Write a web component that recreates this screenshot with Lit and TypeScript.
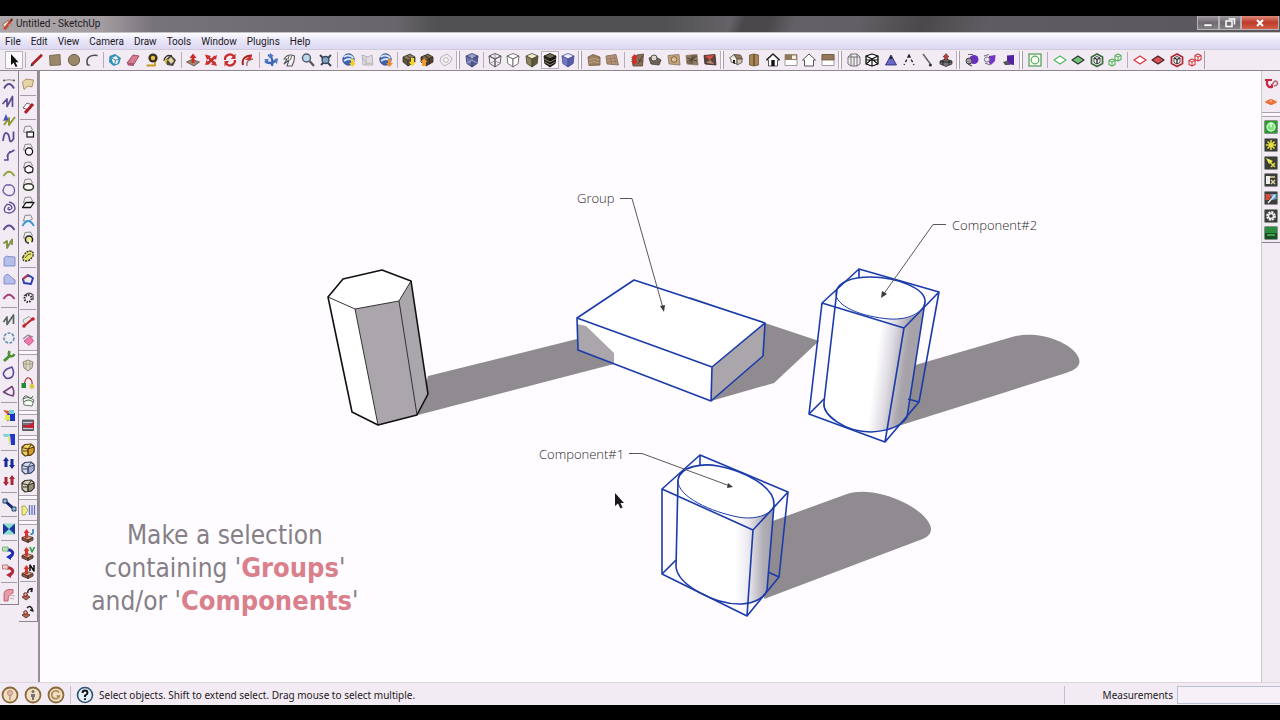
import { LitElement, html, css, svg, type TemplateResult, type SVGTemplateResult } from "lit";
import { customElement } from "lit/decorators.js";

type Art = SVGTemplateResult | SVGTemplateResult[];
type Tool = [label: string, art: Art, state?: string];
type Group = { tools: Tool[]; gap: "thin" | "mid" | "grip" | "end" };

/* ---- drawing helpers, all on a 16 x 16 grid ---- */
const line = (d: string, stroke: string, w = 1.4) =>
  svg`<path d=${d} fill="none" stroke=${stroke} stroke-width=${w} stroke-linejoin="round" />`;
const fill = (d: string, color: string, stroke = "none", w = 0.8) =>
  svg`<path d=${d} fill=${color} stroke=${stroke} stroke-width=${w} stroke-linejoin="round" />`;
const disc = (x: number, y: number, r: number, color: string, stroke = "none", w = 1) =>
  svg`<circle cx=${x} cy=${y} r=${r} fill=${color} stroke=${stroke} stroke-width=${w} />`;

const cube = (top: string, left: string, right: string, edge: string, w = 0.8): SVGTemplateResult[] => [
  fill("M8 1.5 14 4 8 7 2 4Z", top, edge, w),
  fill("M2 4 8 7V15L2.8 11.5Z", left, edge, w),
  fill("M14 4 8 7V15L13.2 11.5Z", right, edge, w),
];
const diamond = (color: string, edge: string): Art => fill("M2 8 8 4 14 8 8 12Z", color, edge, 1.2);
const boxed = (color: string): Art => [
  fill("M8 2 13.5 5V11.5L8 14.5 2.5 11.5V5Z", "#fff", color, 1.8),
  line("M5 6 8 7.5 11 6M8 7.5V12", "#222", 1.3),
  line("M5 6V10.5L8 12 11 10.5V6L8 4.5Z", "#333", 0.9),
];
const pair = (color: string): Art => [
  fill("M2 8.5 5 7 8 8.5V12.5L5 14 2 12.5Z", "#fff", color, 1.1),
  line("M2 8.5 5 10 8 8.5M5 10V14", color, 1),
  fill("M8 3.5 11 2 14 3.5V7.5L11 9 8 7.5Z", "#fff", color, 1.1),
  line("M8 3.5 11 5 14 3.5M11 5V9", color, 1),
];
const house = (body: string) => fill("M1.5 8 8 2 14.5 8H12.5V14H3.5V8Z", body, "#555", 1);
const sheet = (color: string) => fill("M2 3.5 13 2.5 14 13 3 12Z", color, "#8c735a");
const globe = (arrow: string): Art => [
  disc(7.5, 7.5, 5.8, "#3f62ad", "#27427f", 0.7),
  line("M2.5 5Q8 1.500 12.5 6M3 9Q8 5 13 9", "#d4e2f6", 1.8),
  fill("M10 7H13V11H15L11.5 15 8 11H10Z", arrow),
];
const crate = (a: string, b: string, edge: string): SVGTemplateResult[] => [
  fill("M2 5 9 2 14 5 7 8.5Z", a, edge),
  fill("M2 5 7 8.5V14L2 10Z", b, edge),
  fill("M14 5 7 8.5V14L14 10Z", b, edge),
  line("M5.5 3.5 10.5 6.8V12.3", edge, 0.9),
];
const corner = (a: string, b: string, edge: string): Art => [
  fill("M2 5 5 2.5 11 2 14 4.5V10L11 13 5 14 2 11Z", a, edge, 1.2),
  fill("M8 7 14 5V10L11 13 8 13.500Z", b, edge, 1),
  line("M2 5.500 8 7V13.500M3 9H8M8 7 11 3", edge, 1),
];
const badge = (base: Art): Art => [
  svg`<rect x="1.5" y="1.5" width="13" height="13" rx="1" fill="#3b3e3b" stroke="#8b8f8b" />`,
  svg`${base}`,
];
const loop = "M5 2.5 10.5 2 12.5 6 8 8.5 3.5 8Z";
const push = (letter: Art): Art => [
  fill("M2 10.5 7 8.5 13 10.5 8 13Z", "#c9a68f", "#5a3526"),
  fill("M2 10.5V13L8 15.5V13ZM13 10.5V13L8 15.5V13Z", "#8f5a46", "#4a2a1e"),
  fill("M5 11V6H3.5L6.5 2 9.5 6H8V11Z", "#d8342f"),
  svg`${letter}`,
];

/* ---- horizontal toolbar ---- */
const TOP: Group[] = [
  { gap: "thin", tools: [["Select", fill("M5 2V13L7.6 10.8 9.6 15 11.4 14.2 9.4 10.2H12.6Z", "#111"), "on"]] },
  { gap: "thin", tools: [
    ["Line", [line("M3 12.5 13 2.8", "#a51f24", 2.6), fill("M1.5 14.5 2.2 11.4 4.6 13.4Z", "#333")]],
    ["Rectangle", fill("M2.5 3.5 13 2.5 13.5 13 3 13.5Z", "#9b8769", "#6e5e48")],
    ["Circle", disc(8, 8, 5.6, "#9b8769", "#6e5e48")],
    ["Arc", [line("M4 13.500C1 7 5 2 13.500 3.500", "#4e4b50", 1.5), line("M2.500 12 6 13.500", "#4e4b50", 1.3)]],
  ] },
  { gap: "thin", tools: [
    ["Make Component", [fill("M2.500 4 8 2 14 6 12 12 6.500 14 2 10Z", "#2f8fb8"), fill("M4.500 6 9 4 12 7.500 10 12 6 11Z", "#eff8fc"), line("M4.500 6 8.500 8 12 7.500M8.500 8 8 11", "#2c6c8c", 0.8)]],
    ["Eraser", [fill("M2 11 8 3 14 4 9 12Z", "#d87b92", "#8c3a50"), fill("M2 11 9 12V14L3 13.5Z", "#a9566d")]],
    ["Tape Measure", [disc(9, 6, 4.6, "#3c3222"), disc(9, 6, 2.2, "#e9c43b"), line("M11 10V13.5H2.5", "#c49a1c", 1.8)]],
    ["Paint Bucket", [fill("M3 8 9 3 14 8 11 14 5 13Z", "#4e4638"), fill("M6 8 9 5 12 9 9 12Z", "#e3d8ab"), line("M2 9Q3 2 10 4", "#333", 1.4), fill("M2 8 6 7 4 12Z", "#d7b92e")]],
  ] },
  { gap: "thin", tools: [
    ["Push/Pull", [fill("M1.5 10 7 7.5 14.5 10 9 14Z", "#a08a6f", "#5c4b38"), fill("M6.5 11V6H4.5L8 1.5 11.5 6H9.5V11Z", "#cc2a28")]],
    ["Move", [line("M4 4 12 12M12.500 4.500 4 12", "#c02c29", 2.4), fill("M2 2.500 8 4 4 8ZM14 3 13 8 10 5ZM14 14 8 12.500 12 9ZM2 13 3.500 8 7 12Z", "#d4302b")]],
    ["Rotate", [line("M3 8A5 5 0 0 1 12 4.6M13 8A5 5 0 0 1 4 11.4", "#c92d2b", 2.2), fill("M13.5 1.5V7H8.8ZM2.5 14.5V9H7.2Z", "#c92d2b")]],
    ["Offset", [line("M3 13Q1 4 12 3.5", "#a12422", 2), line("M7 14Q5.5 8 13 7", "#88736e", 1.4), fill("M5 8 12 2.5 11 8Z", "#d4302b")]],
  ] },
  { gap: "thin", tools: [
    ["Orbit", [line("M2 9Q8 14 14 7M5 3Q11 5 9 14", "#3c66b4", 2.3), fill("M7 1 11 4 6 6ZM1.5 7 6 7 3 12ZM11 9 15 6 14 12Z", "#4f7bc8")]],
    ["Pan", [fill("M3 7Q7 1 13.500 4L13 9 11 14H6L8 8 3 12 6 7Z", "#f7f3f5", "#555", 1.1), line("M8 4 7 7M10.500 4 9.500 8", "#555", 0.9)]],
    ["Zoom", [line("M9.5 9 14 14", "#555", 2.2), disc(6.5, 6, 4, "#bcd7ea", "#4d5b70", 1.4)]],
    ["Zoom Extents", [line("M2 3 13 14M13 3 3 13", "#3a4658", 2), disc(7.5, 8, 3.5, "#7da7c4", "#3a4658", 1.3)]],
  ] },
  { gap: "thin", tools: [
    ["Add Location", globe("#f0cf2e")],
    ["Toggle Terrain", [fill("M3 3 9 5 13 3 14 13 4 13Z", "#dfdcdf", "#aaa5aa"), line("M4 6 8 12M7 5V12L13 11", "#bbb6bb", 1)]],
    ["Preview in Google Earth", globe("#e68a2e")],
  ] },
  { gap: "grip", tools: [
    ["Get Models", [...crate("#8a7c5e", "#5f563f", "#3b3527"), fill("M10 6H13V10H15L11.5 14.5 8 10H10Z", "#f2d62b")]],
    ["Share Model", [...crate("#7d664b", "#4f4130", "#332a1f"), fill("M3 14V10H1.5L5 6 8.5 10H7V14Z", "#ee9b32")]],
    ["Share Component", [fill("M3 5 9 2 14 6 12 11 6 14 2 9Z", "#f0eef0", "#aaa5aa"), disc(8, 8, 2.3, "#fff", "#b4b0b4")]],
  ] },
  { gap: "thin", tools: [["X-ray", [...cube("#8e95c4", "#6c74a8", "#555c92", "#383f6c"), line("M2.5 11 8 8.5 13.5 11M8 2V8.5", "#c3c8e8", 0.7)]]] },
  { gap: "grip", tools: [
    ["Wireframe", [...cube("none", "none", "none", "#555", 0.9), line("M2.8 11.5 8 8.8 13.2 11.5M8 1.5V8.8", "#777", 0.7)]],
    ["Hidden Line", cube("#fff", "#fff", "#fff", "#666", 0.9)],
    ["Shaded", cube("#f1ecd0", "#8d8362", "#5f573d", "#4b452f")],
    ["Shaded With Textures", [...cube("#6e694f", "#26241d", "#111", "#111"), line("M2.5 7 8 10 13.5 7M3 10 8 13 13 10", "#a39c78", 0.8)], "on"],
    ["Monochrome", cube("#eef0fc", "#7079c0", "#565eaa", "#4a5190")],
  ] },
  { gap: "mid", tools: [
    ["From Contours", [fill("M2 5 7 2.5 14 5V13L3 13.5Z", "#9c7f61", "#6f5740"), line("M3 8Q8 5 13.5 8M3 11Q8 8 13.5 11", "#c5a98b", 0.9)]],
    ["From Scratch", [fill("M2 4 12 2.5 14.5 13 3 12Z", "#b8977a", "#7f6650"), line("M6 4 8 12M10 3.5 12 12M3 7 13 6M3 10 14 9", "#8d7058", 0.7)]],
  ] },
  { gap: "grip", tools: [
    ["Smoove", [fill("M3 7 8 3 14.5 2 13.500 14 4 14Z", "#8a6f5a", "#594434"), fill("M5.500 2 9 6H7V9H9L5.500 13 2 9H4V6H2Z", "#d12c2a"), line("M9 12 13.500 4M9 7 13.500 10", "#4b3a2d", 0.9)]],
    ["Stamp", [fill("M2 6 7 4 14 8 12 13 4 12Z", "#6d6258", "#3f372f"), disc(7, 6, 3, "#ddd6ca", "#555")]],
    ["Drape", [sheet("#c0a37e"), disc(8, 7.5, 2.8, "#d9c19c", "#85683f")]],
    ["Add Detail", [sheet("#8d7b62"), line("M3 6 13 9M5 12 11 3M3 10 13 4M8 3V12", "#4c4132", 0.9)]],
    ["Flip Edge", [fill("M2 3.5 13 2.5 14 13 3 12Z", "#57453c", "#33271f"), fill("M3 4 12.5 3 8 8Z", "#dd4c45"), fill("M4 11 8 8 12.5 12Z", "#b78474")]],
  ] },
  { gap: "grip", tools: [
    ["Iso", [fill("M1.5 6 6 2.5 9 7V12L3 10V7Z", "#f1ebe4", "#564c42"), fill("M6 2.5 12.5 3 14.5 7 9 7Z", "#93795b", "#564c42"), fill("M9 7H14V10.5L9 13Z", "#d2c4b3", "#564c42"), fill("M5 8H7V12L5 11Z", "#222")]],
    ["Top", [fill("M3.5 3 8 2V14L3.5 13ZM8 2 12.5 3V13L8 14Z", "#a68557", "#6f5432"), line("M8 2V14", "#6f5432", 1)]],
    ["Front", [house("#fff"), line("M1.5 8 8 2 14.5 8", "#222", 1.5), fill("M6.3 8H9.7V14H6.3Z", "#111")]],
    ["Right", [fill("M2 2.5H14V13.5H2Z", "#fff", "#888"), fill("M2 2.5H14V8H2Z", "#95785a"), fill("M9 3.5H13V7H9Z", "#f3efe9")]],
    ["Back", house("#fff")],
    ["Left", [fill("M2 2.5H14V13.5H2Z", "#fff", "#888"), fill("M2 2.5H14V8H2Z", "#95785a", "#6d573f")]],
  ] },
  { gap: "grip", tools: [
    ["Subdivide", [fill("M2 5 5 2 11 2 14 5V12L11 14H5L2 12Z", "#eee", "#555"), line("M5 2V14M8 5V14M11 2V14M2 5 8 5 14 5", "#666", 0.9)]],
    ["Subdivide and Smooth", [fill("M2 4 8 2 14 4V12L8 14 2 12Z", "#fff", "#111", 1.3), line("M2 4 8 7 14 4M8 7V14M2 12 8 7 14 12M2 8H14", "#111", 1.2)]],
    ["Smooth Subdivided", [fill("M8 3 13.5 13H2.5Z", "#6968c8", "#24226b"), fill("M8 3 9.5 7H6.3Z", "#222")]],
    ["Crease", [svg`<path d="M8 3 3 13M8 3 13 13" fill="none" stroke="#222" stroke-width="1.3" stroke-dasharray="3 2" />`, fill("M8 1.5 9.5 5.5H6.5Z", "#222")]],
    ["Knife", [line("M4 2 12.5 13.5", "#5e665b", 1.5), line("M10 13 12.5 13.5", "#222", 2)]],
    ["Extrude", [fill("M2 9 8 7 14 9V12L8 14.5 2 12Z", "#77777c", "#333"), line("M2 10H14M5 8V13M11 8V13", "#222", 1), fill("M6.5 8V5H5L8 1.5 11 5H9.5V8Z", "#c23a3a", "#333", 0.5)]],
  ] },
  { gap: "grip", tools: [
    ["Rounded Corner", [disc(10, 7.5, 4.5, "#6a2fbc"), line("M4 2.500H9", "#666", 1), disc(5, 9, 3, "#9a9aa2", "#444", 1), line("M4 12 8 14", "#444", 1.2)]],
    ["Sharp Corner", [fill("M7 4 13.500 3 13 9 9 13 7 11Z", "#7436c4"), line("M2 4 7 2.500M3 11 8 13", "#777", 1.2), disc(5, 7.500, 2.6, "#e6e2ee", "#777", 1)]],
    ["Bevel", [fill("M6 3.5 13 3V13L6 12Z", "#5322a0"), fill("M2 10 7 8.5 9 13 4 13Z", "#55555e")]],
  ] },
  { gap: "mid", tools: [["Solid Inspector", [svg`<rect x="2" y="2" width="12" height="12" fill="#f3fbf3" stroke="#4d9c55" stroke-width="1.2" />`, disc(8, 8, 3.8, "none", "#59a861", 1.2)]]] },
  { gap: "mid", tools: [
    ["Hide Edges", diamond("#fff", "#55b65e")],
    ["Hide Faces", diamond("#74c37b", "#2c3a2d")],
    ["Hide Group", boxed("#3d6b42")],
    ["Hide All", pair("#4bab54")],
  ] },
  { gap: "end", tools: [
    ["Show Edges", diamond("#fff", "#d9303a")],
    ["Show Faces", diamond("#d9525b", "#4a1f22")],
    ["Show Group", boxed("#b02a32")],
    ["Show All", pair("#d22f38")],
  ] },
];

/* ---- side palettes ---- */
const P = "#5c4a94";
const SPLINES: Group[] = [
  { gap: "thin", tools: [
    ["Bezier", [line("M3 12.500Q8 3.500 13 12.500", P, 1.9), line("M2 4.500Q8 3 14 4.500", "#888", 1), disc(3, 4.500, 1.1, "#666"), disc(13, 4.500, 1.1, "#666")]],
    ["Polyline", line("M1.500 10 6 5V12.500L11.500 2.500V13", P, 1.7)],
    ["Polyline divided", [line("M3 13 8 6V13L14 5", "#8f9b33", 2), fill("M2 9 5 2 7.500 8Z", "#4a4fc0")]],
    ["B-Spline", line("M2 12Q3 3 5.500 4T8.500 10 12.500 10V2.500", P, 1.8)],
    ["Cubic", [line("M3 13H7Q6 7 8 6T13.500 3", P, 1.6), disc(6.500, 9, 1.1, P), disc(9, 5, 1.1, P)]],
    ["Arc spline", line("M2.5 11Q8 2.5 13.5 11", "#8fa43c", 1.9)],
    ["Closed curve", line("M5 3H10Q14 5 13.500 9T9.500 13.500 3.500 11.500 2.500 7Q3 4 5 3Z", "#6c5ca2", 1.3)],
    ["Spiral", line("M8.5 8Q7 7 7 9 9 11 11 8 10 4 6 4.5 2 8 4 12 11 15 14 9Q14 3 8 2", P, 1.3)],
    ["Arc", line("M2.5 12Q8 3 13.5 12", P, 1.9)],
    ["Zigzag", line("M2.500 8.500 6 6V13L11 4.500V10", "#7b9040", 1.8)],
    ["Surface A", fill("M3 13V5Q5 2 8 3.5L14 4V13Z", "#b4bee9", "#7580bf")],
    ["Surface B", fill("M3 13V6Q6 1 9 5L14 9V13Z", "#b4bee9", "#7580bf")],
    ["Catenary", line("M2.5 11Q8 2.5 13.5 11", "#a03f72", 1.9)],
  ] },
  { gap: "thin", tools: [
    ["Split polyline", line("M2.500 10 6 5V12.500L12.500 3V12", "#59645c", 1.7)],
    ["Ring", svg`<circle cx="8" cy="8" r="5" fill="none" stroke="#6795b5" stroke-width="1.7" stroke-dasharray="3 1.3" />`],
    ["Properties", [line("M3 13 9 7.5", "#4a9130", 3), line("M8.5 3Q7 7 9 8 12 9 13.5 6", "#4a9130", 2.6)]],
    ["Close curve", line("M4 12Q0 8 6 4L11 2Q14 8 11 12 6 15 4 12Z", "#594896", 1.6)],
    ["Close arc", line("M2.5 9 11 3.5Q14 8 12 13 7 12 2.5 9Z", "#71467e", 1.6)],
  ] },
  { gap: "thin", tools: [["Scale box", [fill("M6 6H14V14H6Z", "#1b32c4"), fill("M8 3H13V7H8Z", "#6fd0d8"), fill("M4 8H9V14L4 13Z", "#e6e84f"), fill("M2 3 8 4 7 8Z", "#e04a25")]]] },
  { gap: "thin", tools: [["Stretch box", [fill("M9 3H14V14H10Z", "#2137c9"), fill("M2 3H9V6H3Z", "#81d3db"), fill("M7 5H9V13H8Z", "#e6e46c")]]] },
  { gap: "thin", tools: [
    ["Raise", fill("M5 2 8 6H6.5V12H3.5V6H2ZM11 14 14 10H12.5V4H9.5V10H8Z", "#172a9c")],
    ["Lower", fill("M5 13 8 9H6.5V4H3.5V9H2ZM11 2 14 6H12.5V12H9.5V6H8Z", "#a82834")],
  ] },
  { gap: "thin", tools: [["Diagonal", [line("M4 4 13 12", "#15237e", 2.8), fill("M2 2H6V6H2ZM11 10H15V14H11Z", "#7fc3d8", "#224")]]] },
  { gap: "thin", tools: [["Mirror", [fill("M2 2.500H14V13.500H2Z", "#8ddbd0"), fill("M2 2.500 8 8 2 13.500ZM14 2.500 8 8 14 13.500Z", "#193a9e")]]] },
  { gap: "thin", tools: [
    ["Bend", [line("M6 5H9Q14.500 8 9 12", "#1d2db4", 3), fill("M1.5 2H7V6H1.5Z", "#bfe3b8", "#6a6"), fill("M10 9V15L5 12Z", "#1d2db4")]],
    ["Bend back", [line("M6 5H9Q14.500 8 9 12", "#b02a3a", 3), fill("M1.5 2H7V6H1.5Z", "#f3cdcd", "#a66"), fill("M10 9V15L5 12Z", "#b02a3a")]],
  ] },
  { gap: "end", tools: [["Fillet pipe", [fill("M3 14V7Q3 3 8 2.5H12V6Q7 7 7 14Z", "#e79aa7", "#b5525f"), line("M9 8 14 9M9 11 13 12", "#c9a3ab", 1)]]] },
];

const MODIFY: Group[] = [
  { gap: "thin", tools: [["Patch", fill("M2.5 6 6 3 13.5 4 12 11 8 10 4 13.5Z", "#e8d3a4", "#9a8250")]] },
  { gap: "thin", tools: [["Cut line", [fill("M3 8 7 3 12 5 9 10Z", "#fff", "#444"), line("M5 13 13 4", "#b01f29", 3)]]] },
  { gap: "thin", tools: [
    ["Surface rectangle", [line(loop, "#888", 1), svg`<rect x="7" y="8" width="6.5" height="5" fill="#fff" stroke="#111" stroke-width="1.2" />`]],
    ["Surface circle", [line(loop, "#888", 1), disc(9, 9.5, 3.6, "#fff", "#111", 1.3)]],
    ["Surface polygon", [line(loop, "#888", 1), fill("M5 7.5 9 5.5 13 8 12.5 12 8 13 5 11Z", "#fff", "#222", 1.3)]],
    ["Surface ellipse", [line(loop, "#888", 1), svg`<ellipse cx="8.5" cy="10" rx="5" ry="3.2" fill="#fff" stroke="#2e3d20" stroke-width="1.5" />`]],
    ["Surface parallelogram", [line(loop, "#888", 1), fill("M6 7.5H14L10.5 12.5H2.5Z", "#fff", "#111", 1.3)]],
    ["Surface arc", [line(loop, "#888", 1), line("M2.5 13Q8 3 14 13", "#369ad0", 1.8)]],
    ["Surface sector", [line(loop, "#888", 1), disc(9, 9.5, 3.6, "#e9e78a", "#222", 1.5), fill("M9 9.5V14H13Z", "#fff")]],
    ["Surface freehand", [svg`<path d="M3 9Q6 3 10 3T13 8Q10 13 6 13T3 9Z" fill="#e4e36c" stroke="#333" stroke-width="1.4" stroke-dasharray="2 1" />`, line("M5 10Q8 5 11 6", "#555", 1)]],
  ] },
  { gap: "thin", tools: [
    ["Edit contour", [line("M3 7 8 3 13 6 11 12 4 11Z", "#2b3eb5", 2), line("M3 7 8 3", "#c33645", 2)]],
    ["Spray", [line("M4 6Q9 1 13 5L13 10", "#555", 1.3), svg`<circle cx="8" cy="8.5" r="3.500" fill="none" stroke="#222" stroke-width="2" stroke-dasharray="1.4 1.3" />`]],
  ] },
  { gap: "grip", tools: [
    ["Stretch", [fill("M3 6 9 2.5 12 6 5 11Z", "#eee", "#888"), line("M4 12 13 4.5", "#c3202a", 2.2), disc(4, 12, 1.8, "#c3202a"), disc(13, 5, 1.8, "#c3202a")]],
    ["Erase contour", [line("M3 7 8 3 13 5", "#888", 1.2), fill("M4 9 10 4 13.5 9 9 13.5Z", "#f07bab", "#bc3f77")]],
  ] },
  { gap: "grip", tools: [
    ["Weld", [fill("M3 5 8 3 13 5 12 11 8 14 4 11Z", "#dcd7c4", "#777260"), line("M6 4V12M10 4V12M3 7H13", "#99947f", 0.8)]],
    ["Junction", [line("M4 11Q5 2 9 3 13 5 12 11", "#b13b35", 1.2), fill("M1.5 8H6V13H1.5Z", "#248a35"), disc(12, 11.5, 2.4, "#dcc93d")]],
    ["Soap skin", [fill("M3 6 8 4 14 7 12 13 4 12Z", "#f4fbf4", "#465b46"), line("M3 6Q5 1 8 4T13 3M4 9Q8 5 13 9", "#465b46", 1)]],
  ] },
  { gap: "grip", tools: [["Joint push", [fill("M2.5 3H13.500V13.500H2.500Z", "#6b6f80", "#444"), line("M3 5.500H13M3 11.500H13", "#c9c9d2", 1), fill("M3 8H9L14 4.500V11L9 11V10.500H3Z", "#c3222f")]]] },
  { gap: "grip", tools: [
    ["Round corner", corner("#f0cf68", "#d79a25", "#543c10")],
    ["Sharp corner", corner("#d6dcee", "#9fabd0", "#3c4565")],
    ["Bevel corner", corner("#d1ccb3", "#938e76", "#35332a")],
  ] },
  { gap: "grip", tools: [["Align", [fill("M2 4H5L8 8 5 13H2Z", "#ecec89", "#99994c"), line("M9.500 3V13M12 3V13M14.500 3V13", "#6471c4", 1.3)]]] },
  { gap: "thin", tools: [
    ["Joint", push(line("M13 2V6Q12 8 10.5 6.5", "#2a7fc0", 1.6))],
    ["Vector", push(line("M10 2 12 7 14.5 2", "#2e9a42", 1.6))],
    ["Normal", push(line("M10 8V2L14 8V2", "#111", 1.5))],
  ] },
  { gap: "end", tools: [
    ["Redo push", [fill("M2 11 6 9 10 11 6 14Z", "#b8644b", "#4a2a1e"), disc(5.5, 8.5, 1.8, "#e2a288", "#622"), line("M8 7Q7 3 12 2.5L11 6", "#222", 1.5), line("M12 2V6", "#222", 1)]],
    ["Undo push", [fill("M2 11 6 9 10 11 6 14Z", "#b8644b", "#4a2a1e"), disc(5.5, 8.5, 1.8, "#e2a288", "#622"), line("M7 4Q11 0 13 7L10 6", "#222", 1.5)]],
  ] },
];

const RENDER: Group[] = [
  { gap: "grip", tools: [
    ["Replace", [line("M2 4H9M4 4V8Q5 12 9 11V8", "#cc2438", 2.2), line("M9 9Q12 3 14 6T11 10", "#b56b75", 1.6)]],
    ["Drop", [svg`<ellipse cx="8" cy="8" rx="6" ry="2.2" fill="#f07a3c" />`, disc(8, 8, 3, "#ee6b35"), disc(8, 7, 1.3, "#f8b48f")]],
  ] },
  { gap: "end", tools: [
    ["Power", badge([fill("M2 2H14V14H2Z", "#2c9b2c"), disc(8, 8, 4, "#7ee57e", "#c8ffc8", 1.4), line("M8 4V8", "#fff", 1.4)])],
    ["Light", badge(line("M8 3V13M3 8H13M4.5 4.5 11.5 11.5M11.5 4.5 4.5 11.5", "#e6e03c", 1.5))],
    ["Pick light", badge([fill("M3 3 10 6 6 9Z", "#f3ed56"), line("M6 6 12 12M12 8 8 12", "#e6e03c", 1.5)])],
    ["Page light", badge([fill("M3 4H7V12H3Z", "#eee"), line("M7 5H12M8 8 12 12M12 8 8 12", "#dddaa0", 1.4)])],
    ["Materials", badge([fill("M2.500 4H9L6 10H2.500Z", "#d84b3a"), fill("M8 4H13.500V9L9 10Z", "#69a7d8"), line("M5 13 12 5", "#eee", 1.4)])],
    ["Settings", badge([svg`<circle cx="8" cy="8" r="3.6" fill="none" stroke="#eee" stroke-width="2.6" stroke-dasharray="2 0.8" />`, disc(8, 8, 2.5, "none", "#eee", 1.4)])],
    ["Start", badge([fill("M2 2H14V8H2Z", "#2d8b3d"), fill("M2 8H14V14H2Z", "#15501f"), line("M4 10H12", "#6ecf7b", 1.2)])],
  ] },
];

@customElement("tool-strip")
class ToolStrip extends LitElement {
  static properties = { groups: { attribute: false } };
  declare groups: Group[];

  static styles = css`
    :host { display: flex; }
    :host([vertical]), :host([vertical]) .group { flex-direction: column; }
    .group { display: flex; }
    button {
      display: flex;
      align-items: center;
      justify-content: center;
      box-sizing: border-box;
      width: 18px;
      height: 18px;
      padding: 0;
      border: 0;
      background: none;
    }
    button:nth-child(3n) { width: 19px; }
    :host([vertical]) button { width: 18px; }
    :host([vertical]) button:nth-child(3n) { height: 17px; }
    button.on { background: #fbf9fd; box-shadow: inset 0 0 0 1px #b9b2ba; }
    svg { display: block; width: 16px; height: 16px; flex: none; }
    .sep { box-sizing: border-box; flex: none; align-self: center; }
    .thin { width: 5px; height: 16px; background: linear-gradient(90deg, transparent 2px, #b5aeb8 2px 3px, transparent 3px); }
    .mid { width: 7px; height: 16px; background: linear-gradient(90deg, transparent 3px, #b5aeb8 3px 4px, transparent 4px); }
    .grip { width: 8px; height: 18px; background: linear-gradient(90deg, transparent 1px, #b5aeb8 1px 2px, #fbf8fc 2px 4px, #a59ea8 4px 5px, transparent 5px); }
    .end { width: 1px; height: 18px; background: #a59ea8; }
    :host([vertical]) .thin { width: 16px; height: 6px; background: linear-gradient(transparent 2px, #a59ea8 2px 3px, transparent 3px); }
    :host([vertical]) .grip { width: 100%; height: 7px; background: linear-gradient(transparent 1px, #aaa2ad 1px 2px, #fbf8fc 2px 5px, #aaa2ad 5px 6px, transparent 6px); }
    :host([vertical]) .end { width: 100%; height: 1px; background: #8b838e; }
  `;

  render() {
    return this.groups.map(
      (g) => html`<div class="group">
          ${g.tools.map(
            ([label, art, state]) => html`<button type="button" class=${state ?? ""} aria-label=${label}>
              <svg viewBox="0 0 16 16" aria-hidden="true">${art}</svg>
            </button>`
          )}
        </div>
        <div class="sep ${g.gap}"></div>`
    );
  }
}

@customElement("model-view")
class ModelView extends LitElement {
  static styles = css`
    :host { display: block; position: relative; overflow: hidden; background: #fefcfe; }
    svg { display: block; width: 100%; height: 100%; }
    .shadow { fill: #8f8b91; }
    .face { fill: #fff; }
    .shade { fill: #aaa6ac; }
    .edge { fill: none; stroke: #111; stroke-width: 1.6; stroke-linejoin: round; }
    .inner { fill: none; stroke: #333; stroke-width: 1; }
    .sel { fill: none; stroke: #1b3bab; stroke-width: 1.6; stroke-linejoin: round; }
    .fine { fill: none; stroke: #1b3bab; stroke-width: 1; }
    .leader { fill: none; stroke: #5b565c; stroke-width: 1; }
    .tip { fill: #3c383d; }
    .label { font: 300 13px "Open Sans", "Noto Sans", sans-serif; fill: #2c282e; }
    .caption {
      position: absolute;
      left: 4.2%;
      bottom: 10.4%;
      margin: 0;
      text-align: center;
      font: 400 26px/33px "DejaVu Sans Condensed", "Noto Sans", sans-serif;
      color: #858087;
    }
    .caption strong { color: #d9808c; font-size: 27px; font-weight: 700; line-height: 1; }
  `;

  render(): TemplateResult {
    return html`
      <svg viewBox="40 71 1221 611" role="img" aria-label="Model with a prism, a group and two components">
        <defs>
          <linearGradient id="round1" gradientUnits="userSpaceOnUse" x1="735" y1="0" x2="772" y2="0">
            <stop offset="0" stop-color="#fff" />
            <stop offset="0.35" stop-color="#eceaf1" />
            <stop offset="0.75" stop-color="#b3afb8" />
            <stop offset="1" stop-color="#a6a2aa" />
          </linearGradient>
          <linearGradient id="round2" gradientUnits="userSpaceOnUse" x1="876" y1="360" x2="907" y2="364">
            <stop offset="0" stop-color="#fff" />
            <stop offset="0.45" stop-color="#dedbe3" />
            <stop offset="0.9" stop-color="#aba7ae" />
            <stop offset="1" stop-color="#a6a2a9" />
          </linearGradient>
        </defs>

        <path class="shadow" d="M428 376 577 339 614 353V364L418 415Z" />
        <path class="shadow" d="M690 297 765 323 819 341 774 383 711 401Z" />
        <path class="shadow" d="M912 366 1012 337C1035 330 1063 340 1073 350S1082 368 1066 373L895 427Z" />
        <path class="shadow" d="M770 522 847 494C863 489 885 493 905 503 923 512 931 523 931 529S926 538 920 540L764 599Z" />

        <path class="face" d="M343 279 382 270 411 281 399 301 355 309 328 297ZM328 297 355 309 378 425 352 412Z" />
        <path class="shade" d="M355 309 399 301 411 281 428 394 417 415 378 425Z" />
        <path class="inner" d="M328 297 355 309 399 301 411 281M355 309 378 425M399 301 417 415" />
        <path class="edge" d="M328 297 343 279 382 270 411 281 428 394 417 415 378 425 352 412Z" />

        <path class="face" d="M634 280 765 323 763 356 711 401 578 350 577 318Z" />
        <path class="shade" d="M577 324 586 326 614 353V364L578 350Z" />
        <path class="shade" d="M765 323 763 356 711 401 712 367Z" />
        <path class="sel" d="M634 280 765 323 763 356 711 401 578 350 577 318ZM577 318 712 367 765 323M712 367 711 401" />

        <path fill="url(#round2)" d="M837 290 824 402C822 415 845 432 871 432 890 431 903 425 907 417L925 302Z" />
        <path class="face" d="M836 292C838 282 852 277 870 277 898 277 926 289 925 302 925 314 908 320 890 319 862 317 834 306 836 292Z" />
        <path class="fine" d="M836 292C834 306 862 317 890 319 908 320 923 313 925 302" />
        <path class="sel" d="M836 292C838 282 852 277 870 277 898 277 926 289 925 302M837 290 824 402C822 415 845 432 871 432 890 431 903 425 907 417L925 302" />
        <path class="sel" d="M859 269 939 292 904 328 822 303ZM822 303 809 414 885 442 919 402 939 292M904 328 885 442M809 414 824 399M919 402 908 399M859 269V278" />

        <path fill="url(#round1)" d="M678 480 676 567C678 585 715 605 742 604 756 603 765 597 767 590L774 505Z" />
        <path class="face" d="M678 480C680 466 703 463 718 466 745 471 775 487 774 505 771 516 753 520 738 517 712 512 677 497 678 480Z" />
        <path class="fine" d="M678 480C677 497 712 512 738 517 753 520 771 516 774 505" />
        <path class="sel" d="M774 505C775 487 745 471 718 466 703 463 680 466 678 480L676 567C678 585 715 605 742 604 756 603 765 597 767 590L774 505" />
        <path class="sel" d="M700 455 788 492 753 530 662 489ZM662 489V574L747 616 779 577 788 492M753 530 747 616M662 574 676 560M779 577 768 572M700 455V465" />

        <path class="leader" d="M620 198.500H632L663 308M946 224.500H933L883 295M629 453.500H642L730 486" />
        <path class="tip" d="M664 312 660 306 665 305ZM881 298 882 291 887 294ZM733 487 727 488 728 483Z" />
        <text class="label" x="577" y="203">Group</text>
        <text class="label" x="952" y="230">Component#2</text>
        <text class="label" x="539" y="459">Component#1</text>

        <path d="M615 493V506L618 503.500 620.500 508.500 622.500 507.500 620.500 503H624Z" fill="#1c191d" />
      </svg>
      <p class="caption">Make a selection<br />containing '<strong>Groups</strong>'<br />and/or '<strong>Components</strong>'</p>
    `;
  }
}

@customElement("app-root")
export class AppRoot extends LitElement {
  static styles = css`
    :host {
      display: flex;
      flex-direction: column;
      box-sizing: border-box;
      height: 100vh;
      padding: 16px 0 15px;
      overflow: hidden;
      background: #000;
      color: #1d1a22;
      font: 10px/16px Roboto, "Noto Sans", sans-serif;
    }
    .title {
      display: flex;
      align-items: center;
      flex: none;
      height: 16px;
      border-bottom: 1px solid #c5c0c6;
      background:
        linear-gradient(110deg, transparent 57%, #4a484b 58% 60%, transparent 62% 67%, #4a484b 72%, transparent 77%),
        linear-gradient(90deg, #aca6aa 0, #a39da1 8%, #77737a 12%, #68666a 31%, #515053 34% 52%, #646266 57%, #59575b 100%);
    }
    .title svg { width: 13px; height: 13px; margin: 0 2px 0 1px; }
    .title h1 { flex: 1; margin: 0; font-size: 10px; font-weight: 400; line-height: 16px; }
    .window { display: flex; align-self: stretch; padding-right: 1px; }
    .window button {
      display: flex;
      align-items: center;
      justify-content: center;
      width: 22px;
      height: 14px;
      padding: 0;
      border: 1px solid #b9b4b9;
      border-top: 0;
      background: linear-gradient(#a19ca1, #6f6b70 50%, #858085);
    }
    .window .close { width: 38px; background: linear-gradient(#dc8a7c, #bd3b28 50%, #d2604a); }
    .window svg { width: 12px; height: 10px; margin: 0; }
    nav {
      display: flex;
      flex: none;
      gap: 10px;
      height: 16px;
      padding: 0 5px;
      border-bottom: 1px solid #d2cbd9;
      background: linear-gradient(#fefdff, #eceafb 35%, #dcd8f2);
    }
    nav a { color: inherit; text-decoration: none; line-height: 17px; }
    .tools {
      display: flex;
      align-items: center;
      flex: none;
      padding: 1px 0 1px 5px;
      border-bottom: 1px solid #8e8790;
      background: #f3ebf4;
    }
    .work { display: flex; flex: 1; min-height: 0; }
    .side { display: flex; flex: none; align-items: flex-start; background: #f3ebf4; }
    .side tool-strip { padding: 4px 0 0; align-items: center; border-right: 1px solid #8b838e; }
    .side .first { width: 18px; }
    .side .second { width: 19px; }
    .left { border-right: 2px solid #979098; box-sizing: border-box; width: 40px; overflow: hidden; }
    .right { border-left: 1px solid #cfc7d1; width: 18px; }
    .right tool-strip { border: 0; width: 18px; }
    model-view { flex: 1; min-width: 0; }
    footer {
      display: flex;
      align-items: center;
      flex: none;
      height: 21px;
      padding-top: 1px;
      border-top: 1px solid #dcd5de;
      background: #f3ebf4;
      font-family: "Noto Sans", "Open Sans", sans-serif;
    }
    .hints { display: flex; gap: 5px; padding: 0 5px 0 1px; }
    .hints button, .help { width: 18px; height: 18px; padding: 0; border: 0; background: none; }
    .hints svg, .help svg { display: block; width: 18px; height: 18px; }
    .help { margin: 0 5px; }
    .rule { width: 1px; height: 18px; background: #c5bdc9; }
    .status { flex: 1; }
    label { padding: 0 4px 0 38px; }
    input { box-sizing: border-box; width: 103px; height: 18px; border: 1px solid #b8bfd0; border-right: 0; background: #f6f0f8; font: inherit; }
  `;

  render() {
    const menus = ["File", "Edit", "View", "Camera", "Draw", "Tools", "Window", "Plugins", "Help"];
    const coin = (art: Art) => html`<svg viewBox="0 0 18 18" aria-hidden="true">
      <circle cx="9" cy="9" r="7.500" fill="#f1dfc4" stroke="#8a6a3c" stroke-width="1.800" />${art}
    </svg>`;
    return html`
      <header class="title">
        <svg viewBox="0 0 16 16" aria-hidden="true">
          ${fill("M2 8 9 3 12 8 6 14Z", "#e9e0da", "#7b3b2c")}${line("M4 14 13 2", "#c2452a", 3)}${line("M12 4 14 1", "#6d2b1b", 2)}
        </svg>
        <h1>Untitled - SketchUp</h1>
        <div class="window">
          <button type="button" aria-label="Minimize"><svg viewBox="0 0 12 10"><path d="M2 6H10V8.500H2Z" fill="#fff" stroke="#555" stroke-width="0.500" /></svg></button>
          <button type="button" aria-label="Restore"><svg viewBox="0 0 12 10"><path d="M4.500 1H10.500V6.500M2 3H8V8.500H2Z" fill="none" stroke="#fff" stroke-width="1.500" /></svg></button>
          <button type="button" class="close" aria-label="Close"><svg viewBox="0 0 12 10"><path d="M3 2 9 8M9 2 3 8" stroke="#fff" stroke-width="2" /></svg></button>
        </div>
      </header>
      <nav>${menus.map((m) => html`<a href="#">${m}</a>`)}</nav>
      <div class="tools"><tool-strip .groups=${TOP}></tool-strip></div>
      <main class="work">
        <aside class="side left">
          <tool-strip vertical class="first" .groups=${SPLINES}></tool-strip>
          <tool-strip vertical class="second" .groups=${MODIFY}></tool-strip>
        </aside>
        <model-view></model-view>
        <aside class="side right"><tool-strip vertical .groups=${RENDER}></tool-strip></aside>
      </main>
      <footer>
        <div class="hints">
          <button type="button" aria-label="Geo-location">${coin(svg`<circle cx="9" cy="7" r="2.500" fill="#e9b9a4" stroke="#b98c70" /><path d="M9 9.500V14" stroke="#b98c70" stroke-width="1.500" />`)}</button>
          <button type="button" aria-label="Credits">${coin(svg`<circle cx="9" cy="5.500" r="1.500" fill="#77706e" /><path d="M7 8H11V11H10V14H8V11H7Z" fill="#77706e" />`)}</button>
          <button type="button" aria-label="Sign in">${coin(svg`<path d="M12 6.500A4 4 0 1 0 12.500 10H9.500" fill="none" stroke="#a98551" stroke-width="1.600" />`)}</button>
        </div>
        <span class="rule"></span>
        <button type="button" class="help" aria-label="Help">
          <svg viewBox="0 0 18 18"><circle cx="9" cy="9" r="7.500" fill="#e6f0f8" stroke="#2d5273" stroke-width="1.600" /><path d="M6.500 7Q6.500 4.500 9 4.500T11.500 7Q11.500 8.300 9 9.500V11M9 12.300V14" fill="none" stroke="#111" stroke-width="1.900" /></svg>
        </button>
        <span class="status">Select objects. Shift to extend select. Drag mouse to select multiple.</span>
        <span class="rule"></span>
        <label for="measure">Measurements</label>
        <input id="measure" type="text" />
      </footer>
    `;
  }
}
